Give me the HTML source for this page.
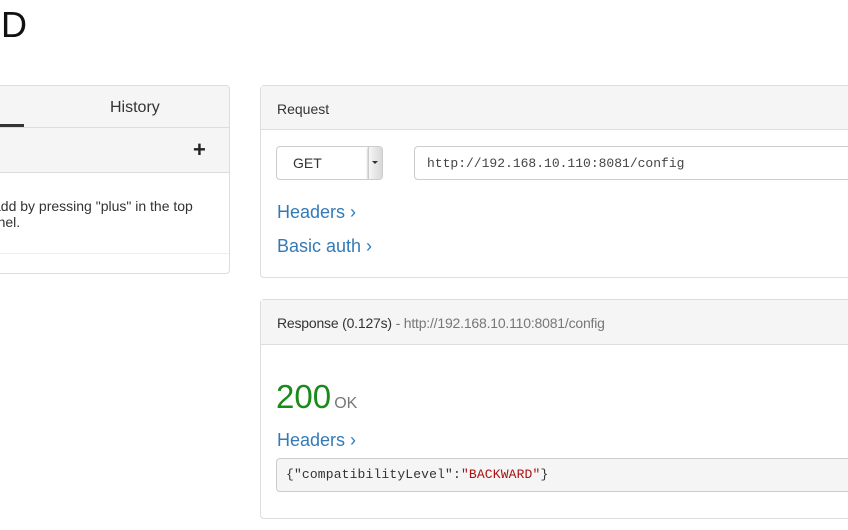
<!DOCTYPE html>
<html><head><style>
body{margin:0;width:848px;height:530px;overflow:hidden;background:#fff;font-family:"Liberation Sans",sans-serif;color:#333;position:relative}
.a{position:absolute}
.panel{position:absolute;border:1px solid #ddd;border-radius:4px;background:#fff;box-sizing:border-box}
.hd{background:#f5f5f5;border-bottom:1px solid #ddd}
a{color:#337ab7;text-decoration:none}
.mono{font-family:"Liberation Mono",monospace}
</style></head><body>
<div class="a" style="left:1px;top:4px;font-size:36px;color:#111">D</div>

<div class="panel" style="left:-10px;top:85px;width:240px;height:189px;overflow:hidden">
 <div class="hd" style="height:41px;position:relative">
  <div class="a" style="left:119px;top:13px;font-size:16px">History</div>
  <div class="a" style="left:0;top:38px;width:33px;height:3px;background:#333"></div>
 </div>
 <div class="hd" style="height:44px;position:relative">
  <div class="a" style="left:202px;top:11px;font-size:22px;font-weight:bold;color:#222;line-height:22px">+</div>
 </div>
 <div class="a" style="left:2px;top:112px;font-size:14px;line-height:16px;width:230px">add by pressing "plus" in the top</div>
 <div class="a" style="left:-9px;top:128px;font-size:14px;line-height:16px">panel.</div>
 <div class="a" style="left:0;top:167px;width:240px;border-top:1px solid #eee"></div>
</div>

<div class="panel" style="left:260px;top:85px;width:600px;height:193px">
 <div class="hd" style="height:43px;position:relative"><div class="a" style="left:16px;top:15px;font-size:14px">Request</div></div>
 <div class="a" style="left:15px;top:60px;width:107px;height:34px;border:1px solid #ccc;border-radius:4px;box-sizing:border-box;background:#fff;overflow:hidden">
  <div class="a" style="left:16px;top:8px;font-size:14px">GET</div>
  <div class="a" style="right:0;top:0;width:13px;height:32px;background:linear-gradient(90deg,#f5f5f5,#d8d8d8);border-left:1px solid #ccc;box-shadow:0 1px 2px #999"></div>
  <div class="a" style="right:4px;top:14px;border:3px solid transparent;border-top:3px solid #333;width:0;height:0"></div>
 </div>
 <div class="a" style="left:153px;top:60px;width:460px;height:34px;border:1px solid #ccc;border-radius:4px;box-sizing:border-box">
  <div class="a mono" style="left:12px;top:9px;font-size:13px;color:#444">http://192.168.10.110:8081/config</div>
 </div>
 <div class="a" style="left:16px;top:116px;font-size:18px"><a>Headers ›</a></div>
 <div class="a" style="left:16px;top:150px;font-size:18px"><a>Basic auth ›</a></div>
</div>

<div class="panel" style="left:260px;top:299px;width:600px;height:220px">
 <div class="hd" style="height:44px;position:relative"><div class="a" style="left:16px;top:15px;font-size:14px;letter-spacing:-0.2px">Response (0.127s) <span style="color:#777">- http://192.168.10.110:8081/config</span></div></div>
 <div class="a" style="left:15px;top:78px;font-size:33px;color:#1a8a1a">200 <span style="font-size:16px;color:#777;margin-left:-6px">OK</span></div>
 <div class="a" style="left:16px;top:130px;font-size:18px"><a>Headers ›</a></div>
 <div class="a" style="left:15px;top:158px;width:600px;height:34px;background:#f5f5f5;border:1px solid #ccc;border-radius:4px;box-sizing:border-box">
  <div class="a mono" style="left:9px;top:8px;font-size:13px;color:#333;letter-spacing:0.15px">{"compatibilityLevel":<span style="color:#a11">"BACKWARD"</span>}</div>
 </div>
</div>
</body></html>
